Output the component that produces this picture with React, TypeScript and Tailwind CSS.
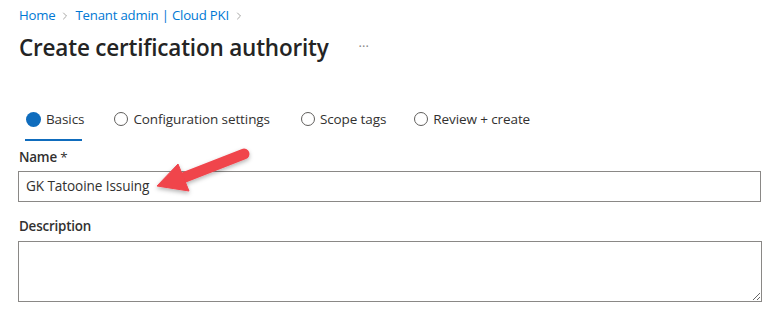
import { ChevronRight } from "lucide-react";

const tabs = [
  { label: "Basics", active: true },
  { label: "Configuration settings", active: false },
  { label: "Scope tags", active: false },
  { label: "Review + create", active: false },
];

export default function App() {
  return (
    <div
      className="relative w-[766px] h-[327px] overflow-hidden bg-white text-[#323130]"
      style={{ fontFamily: '"Open Sans", "Noto Sans", sans-serif' }}
    >
      <div className="pl-[19px] pr-[5px]">
        {/* Breadcrumb */}
        <div className="flex items-center h-[16px] mt-[8px] text-[13.2px] text-[#0078d4] tracking-[-0.2px]">
          <span>Home</span>
          <ChevronRight className="w-[12px] h-[12px] mx-[4px] text-[#8a8886]" strokeWidth={1.5} />
          <span>Tenant admin | Cloud PKI</span>
          <ChevronRight className="w-[12px] h-[12px] mx-[4px] text-[#8a8886]" strokeWidth={1.5} />
        </div>

        {/* Title */}
        <div className="flex items-center h-[30px] mt-[9px]">
          <h1 className="text-[22.5px] leading-[30px] font-semibold tracking-[-0.2px] text-[#242424]">
            Create certification authority
          </h1>
          <span className="ml-[30px] text-[13px] text-[#8a8886] leading-none -mt-[4px]">···</span>
        </div>

        {/* Tabs */}
        <div className="flex items-start mt-[45px] h-[34px]">
          {tabs.map((t, i) => (
            <div
              key={t.label}
              className={`flex flex-col ${i === 0 ? "ml-[7px] mr-[30px]" : i === 1 ? "mr-[31px]" : "mr-[28px]"}`}
            >
              <div className="flex items-center h-[22px] text-[13.5px] tracking-[-0.1px]">
                {t.active ? (
                  <span className="w-[15px] h-[15px] rounded-full bg-[#0f6cbd]" />
                ) : (
                  <span className="w-[14px] h-[14px] rounded-full border border-[#605e5c]" />
                )}
                <span className="ml-[5px] text-[#323130]">{t.label}</span>
              </div>
              {t.active && <div className="mt-[9px] h-[2px] w-[57px] -ml-[1px] bg-[#0f6cbd]" />}
            </div>
          ))}
        </div>

        {/* Name */}
        <div className="text-[13.4px] font-semibold h-[18px] mt-[5px] tracking-[-0.2px]">
          Name <span className="text-[#323130] font-normal">*</span>
        </div>
        <div className="mt-[6px] -ml-[1px] h-[31px] border border-[#8a8886] flex items-center pl-[7px] text-[13.6px] tracking-[-0.1px]">
          GK Tatooine Issuing
        </div>

        {/* Description */}
        <div className="text-[13.4px] font-semibold h-[18px] mt-[14px] tracking-[-0.2px]">Description</div>
        <textarea
          className="block mt-[7px] -ml-[1px] w-[744px] h-[61px] border border-[#8a8886] resize-y outline-none"
          defaultValue=""
        />
      </div>

      {/* Annotation arrow */}
      <svg className="absolute left-[140px] top-[140px]" width="130" height="70" viewBox="140 140 130 70">
        <defs>
          <filter id="sh" x="-20%" y="-20%" width="140%" height="160%">
            <feDropShadow dx="0" dy="2" stdDeviation="2" floodColor="#000" floodOpacity="0.3" />
          </filter>
        </defs>
        <g filter="url(#sh)" fill="#f0444c" stroke="#f0444c">
          <line x1="244" y1="154" x2="180" y2="179" strokeWidth="11" strokeLinecap="round" />
          <polygon points="157,186 178,164 189,191" strokeWidth="1" strokeLinejoin="round" />
        </g>
      </svg>
    </div>
  );
}
